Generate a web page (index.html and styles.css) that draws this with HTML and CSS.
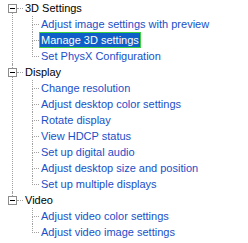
FILE: index.html
```html
<!DOCTYPE html>
<html>
<head>
<meta charset="utf-8">
<link rel="stylesheet" href="styles.css">
</head>
<body>
<ul class="tree">
  <li class="node first">
    <div class="gutter"><span class="stem-top"></span><span class="box"><span class="minus"></span></span><span class="stem"></span></div>
    <div class="body">
      <div class="root-row"><span class="hdots"></span><span class="label">3D Settings</span></div>
      <ul class="children">
        <li class="child"><span class="conn"><i class="up"></i><i class="down"></i></span><span class="label link">Adjust image settings with preview</span></li>
        <li class="child"><span class="conn"><i class="up"></i><i class="down"></i></span><span class="label link selected">Manage 3D settings</span></li>
        <li class="child last"><span class="conn"><i class="up"></i><i class="down"></i></span><span class="label link">Set PhysX Configuration</span></li>
      </ul>
    </div>
  </li>
  <li class="node">
    <div class="gutter"><span class="stem-top"></span><span class="box"><span class="minus"></span></span><span class="stem"></span></div>
    <div class="body">
      <div class="root-row"><span class="hdots"></span><span class="label">Display</span></div>
      <ul class="children">
        <li class="child"><span class="conn"><i class="up"></i><i class="down"></i></span><span class="label link">Change resolution</span></li>
        <li class="child"><span class="conn"><i class="up"></i><i class="down"></i></span><span class="label link">Adjust desktop color settings</span></li>
        <li class="child"><span class="conn"><i class="up"></i><i class="down"></i></span><span class="label link">Rotate display</span></li>
        <li class="child"><span class="conn"><i class="up"></i><i class="down"></i></span><span class="label link">View HDCP status</span></li>
        <li class="child"><span class="conn"><i class="up"></i><i class="down"></i></span><span class="label link">Set up digital audio</span></li>
        <li class="child"><span class="conn"><i class="up"></i><i class="down"></i></span><span class="label link">Adjust desktop size and position</span></li>
        <li class="child last"><span class="conn"><i class="up"></i><i class="down"></i></span><span class="label link">Set up multiple displays</span></li>
      </ul>
    </div>
  </li>
  <li class="node last">
    <div class="gutter"><span class="stem-top"></span><span class="box"><span class="minus"></span></span><span class="stem"></span></div>
    <div class="body">
      <div class="root-row"><span class="hdots"></span><span class="label">Video</span></div>
      <ul class="children">
        <li class="child"><span class="conn"><i class="up"></i><i class="down"></i></span><span class="label link">Adjust video color settings</span></li>
        <li class="child last"><span class="conn"><i class="up"></i><i class="down"></i></span><span class="label link">Adjust video image settings</span></li>
      </ul>
    </div>
  </li>
</ul>
</body>
</html>
```

FILE: styles.css
```css
html, body {
  margin: 0;
  padding: 0;
  background: #ffffff;
}
body {
  font-family: "Liberation Sans", Arial, sans-serif;
  font-size: 11px;
  color: #000000;
}
ul {
  list-style: none;
  margin: 0;
  padding: 0;
}
.tree {
  padding-top: 0;
}
.node {
  display: flex;
}
.gutter {
  width: 17px;
  flex: none;
  display: flex;
  flex-direction: column;
}
.stem-top {
  height: 4px;
  margin-left: 12px;
  border-left: 1px dotted #a0a0a0;
}
.first .stem-top {
  border-left-color: transparent;
}
.box {
  box-sizing: border-box;
  width: 9px;
  height: 9px;
  margin-left: 8px;
  border: 1px solid #8c8c8c;
  background: #ffffff;
  display: flex;
  align-items: center;
  justify-content: center;
}
.minus {
  width: 5px;
  height: 1px;
  background: #000000;
}
.stem {
  flex: 1;
  margin-left: 12px;
  border-left: 1px dotted #a0a0a0;
}
.last .stem {
  border-left-color: transparent;
}
.body {
  flex: 1;
}
.root-row {
  height: 16px;
  display: flex;
  align-items: center;
}
.hdots {
  width: 6px;
  height: 0;
  border-top: 1px dotted #a0a0a0;
}
.label {
  box-sizing: border-box;
  height: 16px;
  line-height: 14px;
  border: 1px solid transparent;
  padding: 0 1px;
  white-space: nowrap;
}
.children {
  margin-left: 15px;
}
.child {
  display: flex;
  height: 16px;
}
.conn {
  width: 7px;
  flex: none;
  display: flex;
  flex-direction: column;
}
.conn .up {
  box-sizing: border-box;
  height: 9px;
  border-left: 1px dotted #a0a0a0;
  border-bottom: 1px dotted #a0a0a0;
}
.conn .down {
  height: 7px;
  border-left: 1px dotted #a0a0a0;
}
.child.last .conn .down {
  border-left-color: transparent;
}
.link {
  color: #1a4fc8;
}
.selected {
  background: #0f5fc8;
  border-color: #3cd23c;
  color: #ffffff;
}
```
